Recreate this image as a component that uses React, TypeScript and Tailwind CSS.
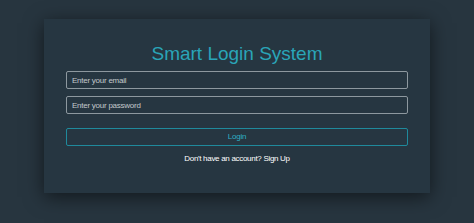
export default function App() {
  return (
    <div className="h-[223px] w-[474px] bg-[#27353f] flex justify-center pt-[19px] font-['Liberation_Sans',Arial,sans-serif]">
      <div className="w-[386px] h-[174px] bg-[#263641] shadow-[0_4px_18px_rgba(0,0,0,0.55)] px-[22px] pt-[21px] flex flex-col">
        <h1 className="text-center text-[#2aa5b8] text-[19px] leading-[28px] mb-[3px]">Smart Login System</h1>
        <input
          type="email"
          placeholder="Enter your email"
          className="h-[18px] w-full bg-transparent border border-[#8d989f] rounded-[2px] px-[5px] text-[8px] tracking-[-0.25px] text-white placeholder:text-[#c3c8cc] outline-none"
        />
        <input
          type="password"
          placeholder="Enter your password"
          className="mt-[7px] h-[18px] w-full bg-transparent border border-[#8d989f] rounded-[2px] px-[5px] text-[8px] tracking-[-0.25px] text-white placeholder:text-[#c3c8cc] outline-none"
        />
        <button className="mt-[14px] h-[18px] w-full border border-[#1f8a9c] rounded-[2px] text-[8px] tracking-[-0.25px] text-[#2eb0c4] bg-transparent">
          Login
        </button>
        <p className="mt-[7px] text-center text-[8px] leading-[11px] tracking-[-0.3px] text-white">Don't have an account? Sign Up</p>
      </div>
    </div>
  );
}
